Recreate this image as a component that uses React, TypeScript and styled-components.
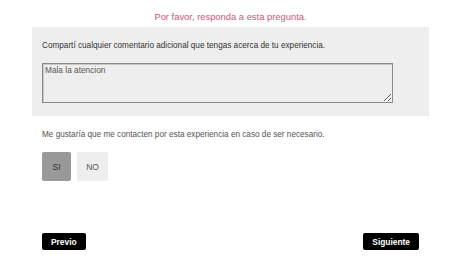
import React, { useState } from 'react';
import styled, { createGlobalStyle } from 'styled-components';

const GlobalStyle = createGlobalStyle`
  html, body {
    margin: 0;
    padding: 0;
    background: #ffffff;
    font-family: "Liberation Sans", Arial, sans-serif;
  }
`;

const Page = styled.div`
  width: 474px;
  height: 267px;
  display: flex;
  flex-direction: column;
  box-sizing: border-box;
  padding: 11px 0 0 32px;
`;

const Alert = styled.div`
  width: 397px;
  text-align: center;
  color: #d6507f;
  font-size: 9.4px;
  line-height: 12px;
  margin-bottom: 4px;
`;

const Panel = styled.div`
  width: 397px;
  height: 89px;
  box-sizing: border-box;
  background: #eeeeee;
  padding: 14px 10px 0 10px;
`;

const Label = styled.div`
  color: #333333;
  font-size: 8.2px;
  line-height: 10px;
  margin-bottom: 12px;
`;

const TextArea = styled.textarea`
  display: block;
  width: 351px;
  height: 40px;
  box-sizing: border-box;
  margin: 0;
  padding: 1px 2px;
  border: 1px solid #8a8a8a;
  box-shadow: inset 1px 1px 0 #c8c8c8;
  background: #eeeeee;
  color: #555555;
  font-family: "Liberation Sans", Arial, sans-serif;
  font-size: 8.3px;
  line-height: 10px;
  resize: vertical;
  outline: none;
`;

const Question = styled.div`
  margin: 14px 0 0 10px;
  color: #555555;
  font-size: 8.2px;
  line-height: 10px;
`;

const Choices = styled.div`
  display: flex;
  gap: 6px;
  margin: 12px 0 0 10px;
`;

const Choice = styled.button<{ $active?: boolean; $width: number }>`
  width: ${(p) => p.$width}px;
  height: 29px;
  padding: 0;
  border: none;
  border-radius: 2px;
  background: ${(p) => (p.$active ? '#999999' : '#eeeeee')};
  color: ${(p) => (p.$active ? '#333333' : '#555555')};
  font-family: "Liberation Sans", Arial, sans-serif;
  font-size: 8.5px;
  cursor: pointer;
`;

const Nav = styled.div`
  display: flex;
  justify-content: space-between;
  width: 377px;
  margin: 52px 0 0 10px;
`;

const NavButton = styled.button`
  height: 17px;
  padding: 0 9px;
  border: none;
  border-radius: 2px;
  background: #000000;
  color: #ffffff;
  font-family: "Liberation Sans", Arial, sans-serif;
  font-weight: bold;
  font-size: 8.4px;
  cursor: pointer;
`;

export default function App(): JSX.Element {
  const [contact, setContact] = useState<'si' | 'no'>('si');
  const [comment, setComment] = useState('Mala la atencion');

  return (
    <Page>
      <GlobalStyle />
      <Alert>Por favor, responda a esta pregunta.</Alert>
      <Panel>
        <Label>Compartí cualquier comentario adicional que tengas acerca de tu experiencia.</Label>
        <TextArea value={comment} onChange={(e) => setComment(e.target.value)} />
      </Panel>
      <Question>Me gustaría que me contacten por esta experiencia en caso de ser necesario.</Question>
      <Choices>
        <Choice $width={29} $active={contact === 'si'} onClick={() => setContact('si')}>SI</Choice>
        <Choice $width={31} $active={contact === 'no'} onClick={() => setContact('no')}>NO</Choice>
      </Choices>
      <Nav>
        <NavButton>Previo</NavButton>
        <NavButton>Siguiente</NavButton>
      </Nav>
    </Page>
  );
}
